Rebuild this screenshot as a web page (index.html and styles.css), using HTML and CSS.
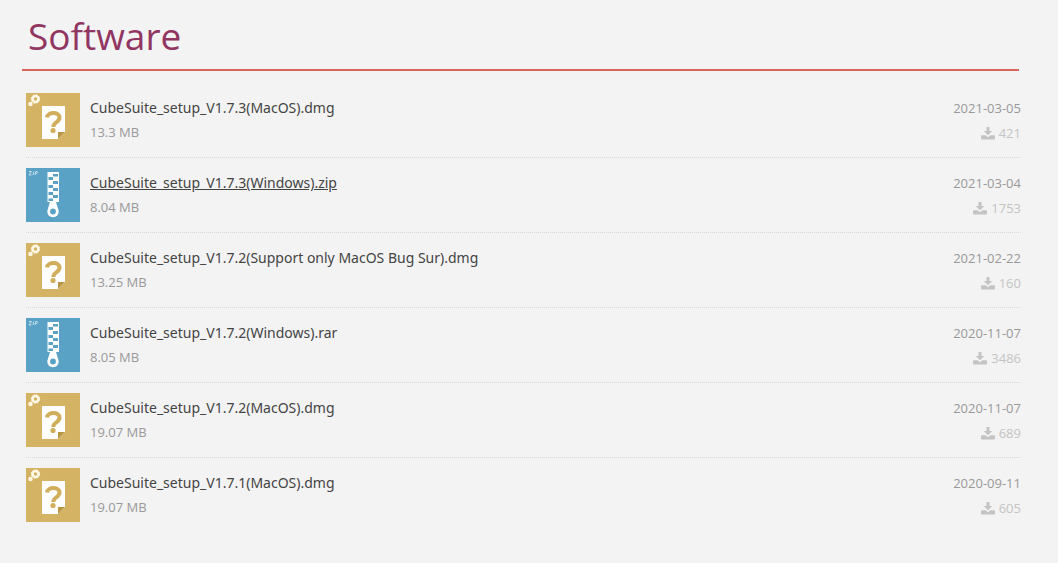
FILE: index.html
```html
<!DOCTYPE html>
<html lang="en">
<head>
  <meta charset="UTF-8">
  <title>Software</title>
  <link rel="stylesheet" href="styles.css">
</head>
<body>

  <!-- Shared icons -->
  <svg class="sprite" aria-hidden="true">
    <symbol id="icon-file" viewBox="0 0 54 54">
      <rect width="54" height="54" fill="#d4b464"/>
      <circle cx="9.500" cy="6" r="3" fill="none" stroke="#fff8e6" stroke-width="2.600"/>
      <circle cx="9.500" cy="6" r="4.200" fill="none" stroke="#fff8e6" stroke-width="1" stroke-dasharray="1.6 1.7"/>
      <circle cx="4.500" cy="11" r="1.300" fill="none" stroke="#fff8e6" stroke-width="1.900"/>
      <path d="M16 13h23v26l-7 7H16z" fill="#fff"/>
      <path d="M32 46v-7h7z" fill="#b99643"/>
      <path d="M21 24.500c.5-6 12.500-6 12.500 0 0 5-6.200 4.500-6.200 9.500" fill="none" stroke="#d0ae5c" stroke-width="4"/>
      <circle cx="27" cy="37.500" r="2.600" fill="#d0ae5c"/>
    </symbol>
    <symbol id="icon-zip" viewBox="0 0 54 54">
      <rect width="54" height="54" fill="#5aa2c5"/>
      <path d="M3 3.500h2.500L3 7h2.500M7.800 3.500L7 7M9 7l.8-3.500h1.400q1 1-.2 1.900H9.500" fill="none" stroke="#c4e0ed" stroke-width="1"/>
      <path d="M21.500 4H33v30H21.500z" fill="#fff"/>
      <path d="M27 6h5v2.500h-5zM22.500 9h4.500v3h-4.500zM27 13h5v3h-5zM22.500 17h4.500v3h-4.500zM27 20h5v3h-5zM22.500 24h4.500v3h-4.500zM27 27h5v3h-5zM22.500 30.500h4.500v2.500h-4.500z" fill="#5aa2c5"/>
      <path d="M24 34h6l2.600 8.500a5.700 5.700 0 1 1-11.200 0z" fill="#fff"/>
      <circle cx="27" cy="43.500" r="2.900" fill="#5aa2c5"/>
    </symbol>
    <symbol id="icon-download" viewBox="0 0 14 13">
      <path d="M5.500 0h3v4h2.800L7 8.200 2.700 4h2.800z"/>
      <path d="M.8 8.300h3.700L7 10.200l2.500-1.900h3.700q.8 0 .8.800v2.700q0 .8-.8.800H.8q-.8 0-.8-.8V9.100q0-.8.8-.8z"/>
    </symbol>
  </svg>

  <div class="page-header">
    <h1>Software</h1>
  </div>

  <!-- File list -->
  <ul class="file-list">
    <li class="file">
      <svg class="file-icon"><use href="#icon-file"/></svg>
      <div class="file-info">
        <a class="file-name" href="#">CubeSuite_setup_V1.7.3(MacOS).dmg</a>
        <span class="file-size">13.3 MB</span>
      </div>
      <div class="file-meta">
        <span class="file-date">2021-03-05</span>
        <span class="file-count"><svg class="download-icon"><use href="#icon-download"/></svg>421</span>
      </div>
    </li>
    <li class="file">
      <svg class="file-icon"><use href="#icon-zip"/></svg>
      <div class="file-info">
        <a class="file-name active" href="#">CubeSuite_setup_V1.7.3(Windows).zip</a>
        <span class="file-size">8.04 MB</span>
      </div>
      <div class="file-meta">
        <span class="file-date">2021-03-04</span>
        <span class="file-count"><svg class="download-icon"><use href="#icon-download"/></svg>1753</span>
      </div>
    </li>
    <li class="file">
      <svg class="file-icon"><use href="#icon-file"/></svg>
      <div class="file-info">
        <a class="file-name" href="#">CubeSuite_setup_V1.7.2(Support only MacOS Bug Sur).dmg</a>
        <span class="file-size">13.25 MB</span>
      </div>
      <div class="file-meta">
        <span class="file-date">2021-02-22</span>
        <span class="file-count"><svg class="download-icon"><use href="#icon-download"/></svg>160</span>
      </div>
    </li>
    <li class="file">
      <svg class="file-icon"><use href="#icon-zip"/></svg>
      <div class="file-info">
        <a class="file-name" href="#">CubeSuite_setup_V1.7.2(Windows).rar</a>
        <span class="file-size">8.05 MB</span>
      </div>
      <div class="file-meta">
        <span class="file-date">2020-11-07</span>
        <span class="file-count"><svg class="download-icon"><use href="#icon-download"/></svg>3486</span>
      </div>
    </li>
    <li class="file">
      <svg class="file-icon"><use href="#icon-file"/></svg>
      <div class="file-info">
        <a class="file-name" href="#">CubeSuite_setup_V1.7.2(MacOS).dmg</a>
        <span class="file-size">19.07 MB</span>
      </div>
      <div class="file-meta">
        <span class="file-date">2020-11-07</span>
        <span class="file-count"><svg class="download-icon"><use href="#icon-download"/></svg>689</span>
      </div>
    </li>
    <li class="file">
      <svg class="file-icon"><use href="#icon-file"/></svg>
      <div class="file-info">
        <a class="file-name" href="#">CubeSuite_setup_V1.7.1(MacOS).dmg</a>
        <span class="file-size">19.07 MB</span>
      </div>
      <div class="file-meta">
        <span class="file-date">2020-09-11</span>
        <span class="file-count"><svg class="download-icon"><use href="#icon-download"/></svg>605</span>
      </div>
    </li>
  </ul>

</body>
</html>
```
FILE: styles.css
```css
/* General body and text styling */
body {
  background-color: #f3f3f3;
  color: #444;
  font-family: "Segoe UI", "Open Sans", "Noto Sans", sans-serif;
  margin: 0;
  padding: 0;
}

.sprite {
  display: none;
}

/* Page title with the red rule under it */
.page-header {
  margin: 0 39px 0 22px;
  padding: 10px 6px 8px;
  border-bottom: 2px solid #d9655a;
}

h1 {
  margin: 0;
  color: #913562;
  font-size: 37px;
  font-weight: normal;
  line-height: 51px;
}

/* File list */
.file-list {
  list-style: none;
  margin: 12px 37px 0 26px;
  padding: 0;
}

.file {
  display: flex;
  gap: 10px;
  padding: 10px 0;
  border-bottom: 1px dotted #d8d8d8;
}

.file:last-child {
  border-bottom: none;
}

.file-icon {
  width: 54px;
  height: 54px;
  flex-shrink: 0;
}

.file-info,
.file-meta {
  display: flex;
  flex-direction: column;
  line-height: 25px;
}

.file-info {
  flex: 1;
  align-items: flex-start;
  padding-top: 2px;
}

.file-meta {
  align-items: flex-end;
  padding-top: 3px;
  font-size: 13px;
}

.file-name {
  color: #444;
  font-family: "Segoe UI", "Noto Sans", sans-serif;
  font-size: 14px;
  text-decoration: none;
}

.file-name:hover,
.file-name.active {
  text-decoration: underline;
}

.file-size {
  color: #999;
  font-size: 13px;
}

.file-date {
  color: #999;
}

/* Download counter */
.file-count {
  display: flex;
  align-items: center;
  gap: 4px;
  color: #c4c4c4;
}

.download-icon {
  width: 14px;
  height: 13px;
  fill: #c4c4c4;
}
```
